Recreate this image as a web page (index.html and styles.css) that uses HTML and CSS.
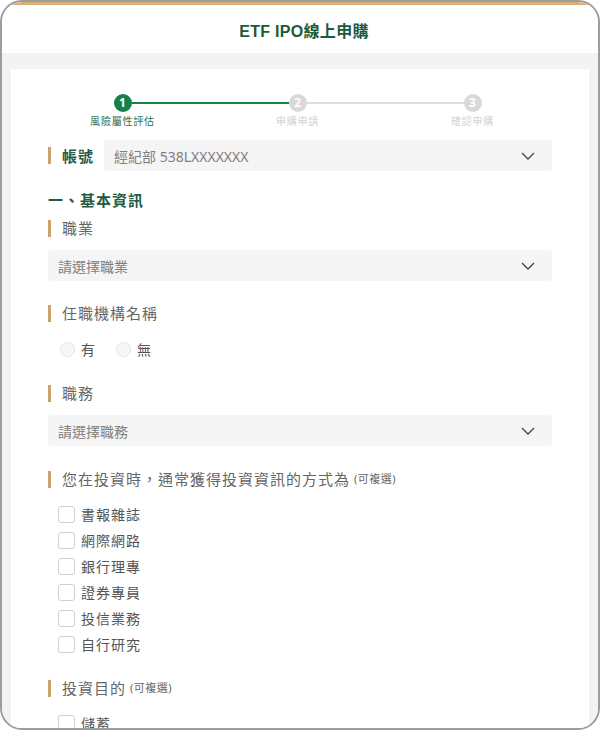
FILE: index.html
```html
<!DOCTYPE html>
<html lang="zh-Hant">
<head>
<meta charset="utf-8">
<title>ETF IPO線上申購</title>
<link rel="stylesheet" href="styles.css">
</head>
<body>
<div class="frame">
  <header class="top">
    <h1 class="title">ETF IPO線上申購</h1>
  </header>
  <main class="page">
    <section class="card">
      <div class="stepper">
        <div class="step-track">
          <span class="dot active">1</span>
          <span class="bar active"></span>
          <span class="dot">2</span>
          <span class="bar"></span>
          <span class="dot">3</span>
        </div>
        <div class="step-labels">
          <span class="step-label active">風險屬性評估</span>
          <span class="step-label">申購申請</span>
          <span class="step-label">確認申購</span>
        </div>
      </div>

      <div class="account-row">
        <span class="label strong">帳號</span>
        <div class="select grow">
          <span class="select-text">經紀部 538LXXXXXXX</span>
          <svg class="chev" viewBox="0 0 14 8" width="14" height="8"><path d="M1 1l6 6 6-6" fill="none" stroke="#444" stroke-width="1.3"/></svg>
        </div>
      </div>

      <h2 class="section-title">一、基本資訊</h2>

      <div class="label l-occupation">職業</div>
      <div class="select s-occupation">
        <span class="select-text">請選擇職業</span>
        <svg class="chev" viewBox="0 0 14 8" width="14" height="8"><path d="M1 1l6 6 6-6" fill="none" stroke="#444" stroke-width="1.3"/></svg>
      </div>

      <div class="label l-org">任職機構名稱</div>
      <div class="radios">
        <label class="radio"><span class="circle"></span>有</label>
        <label class="radio"><span class="circle"></span>無</label>
      </div>

      <div class="label l-title">職務</div>
      <div class="select s-title">
        <span class="select-text">請選擇職務</span>
        <svg class="chev" viewBox="0 0 14 8" width="14" height="8"><path d="M1 1l6 6 6-6" fill="none" stroke="#444" stroke-width="1.3"/></svg>
      </div>

      <div class="label l-source">您在投資時，通常獲得投資資訊的方式為<small class="note">(可複選)</small></div>
      <ul class="checks c-source">
        <li class="check"><span class="box"></span>書報雜誌</li>
        <li class="check"><span class="box"></span>網際網路</li>
        <li class="check"><span class="box"></span>銀行理專</li>
        <li class="check"><span class="box"></span>證券專員</li>
        <li class="check"><span class="box"></span>投信業務</li>
        <li class="check"><span class="box"></span>自行研究</li>
      </ul>

      <div class="label l-purpose">投資目的<small class="note">(可複選)</small></div>
      <ul class="checks c-purpose">
        <li class="check"><span class="box"></span>儲蓄</li>
      </ul>
    </section>
  </main>
</div>
</body>
</html>
```

FILE: styles.css
```css
* { box-sizing: border-box; }
html, body { margin: 0; padding: 0; background: #ffffff; }
body {
  font-family: "Noto Sans", "Noto Sans CJK TC", sans-serif;
  color: #555;
}
.frame {
  width: 600px;
  height: 730px;
  border: 2px solid #9c9c9c;
  border-radius: 22px;
  overflow: hidden;
  background: #f3f3f3;
  display: flex;
  flex-direction: column;
}
.top {
  background: #ffffff;
  border-top: 3px solid #d8b074;
  height: 51px;
  flex: none;
  display: flex;
  align-items: center;
  justify-content: center;
}
.title {
  margin: 0 0 0 8px;
  font-family: "Liberation Sans", "Noto Sans CJK TC", sans-serif;
  font-size: 16px;
  font-weight: 700;
  color: #1c5a3c;
  letter-spacing: 0.3px;
  padding-top: 1px;
}
.page {
  flex: 1;
  background: #f3f3f3;
  padding: 16px 9px 0 9px;
}
.card {
  background: #ffffff;
  height: 100%;
  padding: 25px 37px 0 37px;
}
.stepper {
  width: 525px;
  margin: 0 auto 0 -13px;
}
.step-track {
  display: flex;
  align-items: center;
  padding: 0 78.5px;
}
.dot {
  width: 18px;
  height: 18px;
  border-radius: 50%;
  background: #d9d9d9;
  color: #ffffff;
  font-size: 12px;
  font-weight: 700;
  display: flex;
  align-items: center;
  justify-content: center;
  line-height: 1;
  flex: none;
}
.dot.active { background: #14804a; }
.bar {
  flex: 1;
  height: 2px;
  background: #dddddd;
}
.bar.active { background: #14804a; }
.step-labels {
  display: grid;
  grid-template-columns: repeat(3, 1fr);
  margin-top: 2px;
}
.step-label {
  text-align: center;
  font-size: 10px;
  line-height: 14px;
  color: #d2d2d2;
  letter-spacing: 0.8px;
}
.step-label.active { color: #2e6f55; }

.account-row {
  display: flex;
  align-items: center;
  margin-top: 12px;
  gap: 10px;
}
.label {
  display: flex;
  align-items: center;
  font-size: 15px;
  line-height: 20px;
  color: #666;
  letter-spacing: 1px;
}
.label::before {
  content: "";
  width: 3px;
  height: 17px;
  background: #caa36c;
  margin-right: 11px;
  flex: none;
}
.label.strong {
  font-weight: 700;
  color: #2c5a48;
}
.note {
  font-size: 11px;
  letter-spacing: 0.5px;
  margin-left: 4px;
  color: #666;
}
.select {
  height: 31px;
  background: #f5f5f5;
  border-radius: 4px;
  display: flex;
  align-items: center;
  justify-content: space-between;
  padding: 0 17px 0 10px;
}
.select.grow { flex: 1; }
.select-text {
  font-size: 14px;
  color: #808080;
}
.chev { display: block; }

.section-title {
  margin: 19px 0 0 0;
  font-size: 15px;
  line-height: 20px;
  font-weight: 700;
  color: #1f5c44;
  letter-spacing: 1px;
}
.l-occupation { margin-top: 8px; }
.s-occupation { margin-top: 12px; }
.l-org { margin-top: 22px; }
.radios {
  display: flex;
  align-items: center;
  gap: 21px;
  margin-top: 16px;
  padding-left: 12px;
  height: 20px;
}
.radio {
  display: flex;
  align-items: center;
  gap: 6px;
  font-size: 14px;
  color: #555;
}
.circle {
  width: 15px;
  height: 15px;
  border-radius: 50%;
  border: 1px solid #e2e2e2;
  background: #f7f7f7;
}
.l-title { margin-top: 24px; }
.s-title { margin-top: 12px; }
.l-source { margin-top: 23px; }
.checks {
  list-style: none;
  margin: 12px 0 0 0;
  padding: 0 0 0 10px;
}
.check {
  display: flex;
  align-items: center;
  height: 26px;
  font-size: 14px;
  color: #555;
  letter-spacing: 1px;
}
.box {
  width: 17px;
  height: 17px;
  border: 1px solid #d0d0d0;
  border-radius: 3px;
  background: #ffffff;
  margin-right: 6px;
  flex: none;
}
.l-purpose { margin-top: 21px; }
.c-purpose { margin-top: 12px; }
```
